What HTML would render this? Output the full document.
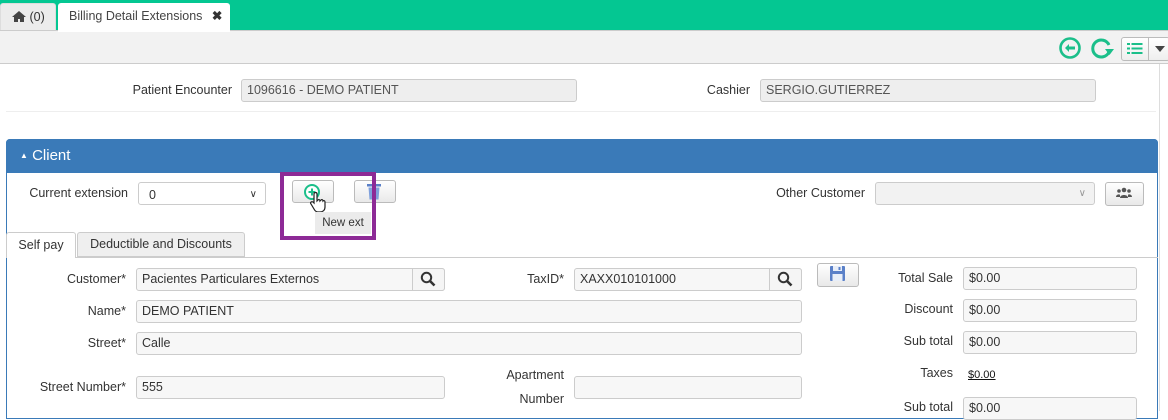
<!DOCTYPE html>
<html><head><meta charset="utf-8"><style>
*{box-sizing:border-box;margin:0;padding:0}
body{width:1168px;height:411px;overflow:hidden;background:#fff;font-family:"Liberation Sans",sans-serif;font-size:12.5px;color:#333;position:relative}
.a{position:absolute}
.inp{position:absolute;height:23px;border:1px solid #ccc;border-radius:3px;background:#f7f7f7;padding:0 5px;line-height:21px;font-size:12.5px;color:#333}
.ro{background:#eee;color:#555}
.lbl{position:absolute;text-align:right;font-size:12.5px;color:#333;line-height:23px}
.btn{position:absolute;border:1px solid #bbb;border-radius:3px;background:linear-gradient(#fff,#e9e9e9)}
.sb{position:absolute;width:32px;height:23px;background:#f5f5f5;right:-1px;top:-1px;border:1px solid #ccc;border-radius:0 3px 3px 0}
</style></head><body>
<div class="a" style="left:0;top:0;width:1168px;height:30px;background:#04c792"></div>
<div class="a" style="left:0;top:3px;width:56px;height:27px;background:#ececec;border-radius:3px 3px 0 0;border:1px solid #ddd;border-bottom:none;line-height:26px;padding-left:11px">
<svg width="14" height="11" viewBox="0 0 14 11" style="vertical-align:-1px"><path d="M7 0L0 6h2v5h4V8h2v3h4V6h2z" fill="#444"/></svg> (0)</div>
<div class="a" style="left:58px;top:3px;width:172px;height:28px;background:#fff;border-radius:3px 3px 0 0;line-height:26px;padding-left:11px;color:#444">Billing Detail Extensions <span style="margin-left:6px;font-weight:bold;color:#333">✖</span></div>
<div class="a" style="left:0;top:30px;width:1168px;height:34px;background:#f2f2f2;border-top:1px solid #ccc;border-bottom:1px solid #ccc"></div>
<div class="a" style="left:58px;top:30px;width:172px;height:2px;background:#fff"></div>
<svg class="a" style="left:1058px;top:36px" width="24" height="24" viewBox="0 0 24 24"><circle cx="12" cy="12" r="9.5" fill="none" stroke="#1bbf8a" stroke-width="2.6"/><path d="M7 12l4-4v2.5h6v3h-6V16z" fill="#1bbf8a"/></svg>
<svg class="a" style="left:1090px;top:36px" width="26" height="24" viewBox="0 0 26 24"><path d="M19 9A8.5 8.5 0 1 0 19 16" fill="none" stroke="#1bbf8a" stroke-width="3"/><path d="M15 13h9l-4.5 6z" fill="#1bbf8a"/></svg>
<div class="a" style="left:1121px;top:37px;width:49px;height:24px;border:1px solid #bbb;border-radius:3px;background:linear-gradient(#fff,#eee)"></div>
<div class="a" style="left:1148px;top:37px;width:1px;height:24px;background:#bbb"></div>
<svg class="a" style="left:1127px;top:42px" width="16" height="13" viewBox="0 0 16 13"><g fill="#1bbf8a"><rect x="0" y="1" width="3" height="2"/><rect x="0" y="5.5" width="3" height="2"/><rect x="0" y="10" width="3" height="2"/><rect x="4.5" y="1" width="11" height="2"/><rect x="4.5" y="5.5" width="11" height="2"/><rect x="4.5" y="10" width="11" height="2"/></g></svg>
<svg class="a" style="left:1155px;top:46px" width="10" height="6" viewBox="0 0 10 6"><path d="M0 0h10L5 6z" fill="#444"/></svg>
<div class="lbl" style="left:100px;top:79px;width:132px">Patient Encounter</div>
<div class="inp ro" style="left:241px;top:79px;width:336px">1096616 - DEMO PATIENT</div>
<div class="lbl" style="left:680px;top:79px;width:70px">Cashier</div>
<div class="inp ro" style="left:760px;top:79px;width:336px">SERGIO.GUTIERREZ</div>
<div class="a" style="left:6px;top:111px;width:1150px;height:1px;background:#eee"></div>
<div class="a" style="left:1159px;top:64px;width:1px;height:347px;background:#ddd"></div>
<div class="a" style="left:6px;top:139px;width:1152px;height:280px;border:1px solid #3a7ab8;border-radius:4px 4px 0 0"></div>
<div class="a" style="left:6px;top:139px;width:1152px;height:34px;background:#3a7ab8;border-radius:4px 4px 0 0;color:#fff;font-size:15px;line-height:34px;padding-left:14px"><span style="font-size:8px;vertical-align:2px">▲</span> Client</div>
<div class="lbl" style="left:20px;top:182px;width:108px">Current extension</div>
<div class="inp" style="left:138px;top:182px;width:128px;background:#fff;padding-left:10px;line-height:24px">0<span style="position:absolute;right:8px;top:0;font-size:10px">&#x2228;</span></div>
<div class="btn" style="left:292px;top:180px;width:42px;height:23px"></div>
<svg class="a" style="left:303px;top:183px" width="18" height="18" viewBox="0 0 18 18"><circle cx="9" cy="9" r="7" fill="#fff" stroke="#1bbf8a" stroke-width="2"/><path d="M9 5.5v7M5.5 9h7" stroke="#1bbf8a" stroke-width="2"/></svg>
<svg class="a" style="left:309px;top:192px" width="18" height="22" viewBox="0 0 18 22"><path d="M5 2c0-2 3-2 3 0v7l1-1c1-1 2 0 2 1l1-1c1-1 2 0 2 1 1-1 2 0 2 1v5c0 3-2 5-5 5H9c-2 0-3-1-4-3L2 12c-1-1 0-3 2-2l1 1z" fill="#fff" stroke="#222" stroke-width="1.2"/></svg>
<div class="btn" style="left:354px;top:180px;width:42px;height:23px"></div>
<svg class="a" style="left:367px;top:183px" width="14" height="17" viewBox="0 0 14 17"><rect x="0" y="1" width="14" height="2.5" fill="#5a80c8"/><rect x="5" y="0" width="4" height="2" fill="#5a80c8"/><path d="M1.5 4.5h11l-1 12h-9z" fill="#7fa0dc"/></svg>
<div class="a" style="left:315px;top:212px;width:56px;height:22px;background:#ebebeb;font-size:11.5px;line-height:22px;text-align:center;color:#333">New ext</div>
<div class="a" style="left:280px;top:172px;width:96px;height:68px;border:4px solid #8d2a96"></div>
<div class="lbl" style="left:740px;top:182px;width:125px">Other Customer</div>
<div class="inp ro" style="left:875px;top:182px;width:220px;background:#f2f2f2"><span style="position:absolute;right:8px;top:0;font-size:10px;color:#999">&#x2228;</span></div>
<div class="btn" style="left:1105px;top:182px;width:39px;height:24px"></div>
<svg class="a" style="left:1116px;top:187px" width="16" height="12" viewBox="0 0 16 12"><g fill="#555"><circle cx="8" cy="3" r="2.3"/><circle cx="3" cy="4" r="1.8"/><circle cx="13" cy="4" r="1.8"/><path d="M4 11c0-4 8-4 8 0z"/><path d="M0 10c0-3 4-3 4-2v2zM16 10c0-3-4-3-4-2v2z"/></g></svg>
<div class="a" style="left:6px;top:257px;width:1152px;height:1px;background:#ccc"></div>
<div class="a" style="left:6px;top:232px;width:70px;height:26px;background:#fff;border:1px solid #ccc;border-bottom:none;border-radius:3px 3px 0 0;line-height:24px;text-align:center">Self pay</div>
<div class="a" style="left:77px;top:232px;width:168px;height:25px;background:#efefef;border:1px solid #ccc;border-radius:3px 3px 0 0;line-height:23px;text-align:center">Deductible and Discounts</div>
<div class="lbl" style="left:20px;top:268px;width:106px">Customer*</div>
<div class="inp" style="left:136px;top:268px;width:309px">Pacientes Particulares Externos<div class="sb" style="width:33px"></div></div>
<svg class="a" style="left:420px;top:271px" width="16" height="16" viewBox="0 0 16 16"><circle cx="6.5" cy="6.5" r="4.7" fill="none" stroke="#333" stroke-width="2"/><path d="M10 10l4.5 4.5" stroke="#333" stroke-width="2.6"/></svg>
<div class="lbl" style="left:490px;top:268px;width:74px">TaxID*</div>
<div class="inp" style="left:574px;top:268px;width:228px">XAXX010101000<div class="sb" style="width:33px"></div></div>
<svg class="a" style="left:777px;top:271px" width="16" height="16" viewBox="0 0 16 16"><circle cx="6.5" cy="6.5" r="4.7" fill="none" stroke="#333" stroke-width="2"/><path d="M10 10l4.5 4.5" stroke="#333" stroke-width="2.6"/></svg>
<div class="btn" style="left:817px;top:263px;width:42px;height:24px"></div>
<svg class="a" style="left:830px;top:266px" width="15" height="15" viewBox="0 0 15 15"><rect x="0" y="0" width="15" height="15" rx="1" fill="#5a80c8"/><rect x="3" y="0" width="9" height="5" fill="#e8eef8"/><rect x="8.5" y="1" width="2" height="3" fill="#5a80c8"/><rect x="2.5" y="8" width="10" height="7" fill="#e8eef8"/></svg>
<div class="lbl" style="left:870px;top:267px;width:83px">Total Sale</div>
<div class="inp" style="left:963px;top:267px;width:174px">$0.00</div>
<div class="lbl" style="left:20px;top:300px;width:106px">Name*</div>
<div class="inp" style="left:136px;top:300px;width:666px">DEMO PATIENT</div>
<div class="lbl" style="left:870px;top:298px;width:83px">Discount</div>
<div class="inp" style="left:963px;top:299px;width:174px">$0.00</div>
<div class="lbl" style="left:20px;top:332px;width:106px">Street*</div>
<div class="inp" style="left:136px;top:332px;width:666px">Calle</div>
<div class="lbl" style="left:870px;top:330px;width:83px">Sub total</div>
<div class="inp" style="left:963px;top:331px;width:174px">$0.00</div>
<div class="lbl" style="left:870px;top:362px;width:83px">Taxes</div>
<div class="a" style="left:968px;top:369px;font-size:11px;text-decoration:underline;color:#111">$0.00</div>
<div class="lbl" style="left:20px;top:376px;width:106px">Street Number*</div>
<div class="inp" style="left:136px;top:376px;width:309px">555</div>
<div class="lbl" style="left:480px;top:364px;width:84px">Apartment</div>
<div class="lbl" style="left:480px;top:388px;width:84px">Number</div>
<div class="inp" style="left:574px;top:376px;width:228px"></div>
<div class="lbl" style="left:870px;top:396px;width:83px">Sub total</div>
<div class="inp" style="left:963px;top:397px;width:174px">$0.00</div>
</body></html>
